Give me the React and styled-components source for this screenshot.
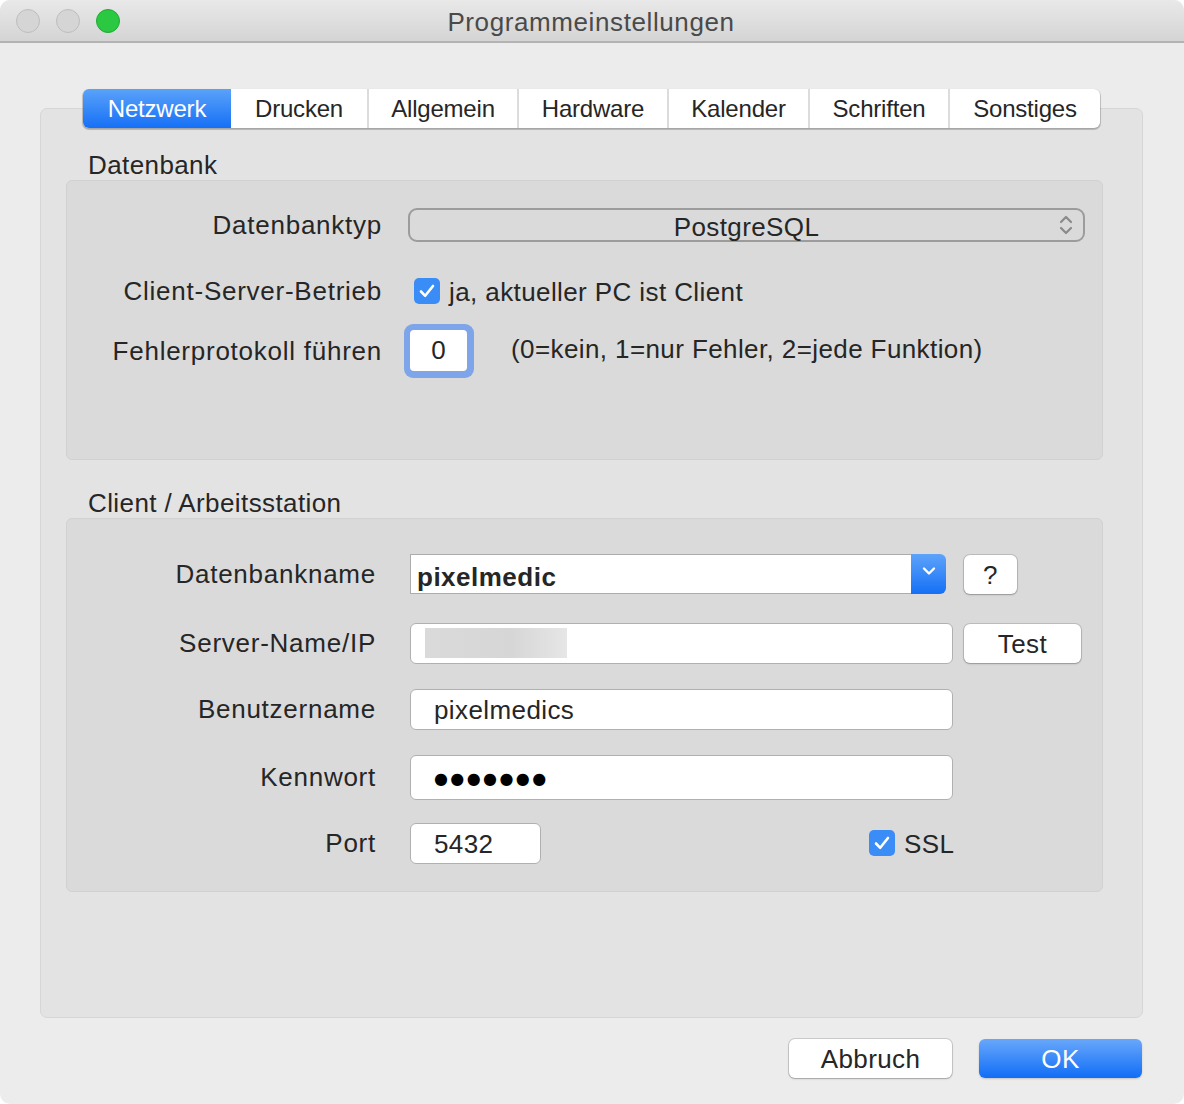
import React from "react";
import styled, { createGlobalStyle } from "styled-components";

const GlobalStyle = createGlobalStyle`
  html, body {
    margin: 0;
    padding: 0;
    background: #ffffff;
  }
  body {
    font-family: "Liberation Sans", Arial, sans-serif;
    color: #262626;
  }
`;

const tabs = ["Netzwerk", "Drucken", "Allgemein", "Hardware", "Kalender", "Schriften", "Sonstiges"];
const tabWidths = [148, 136, 150, 150, 141, 140, 152];

function CheckMark() {
  return (
    <svg width="18" height="16" viewBox="0 0 18 16">
      <path d="M3 8.5 L7.2 12.8 L15 3" fill="none" stroke="#fff" strokeWidth="2.6" strokeLinecap="round" strokeLinejoin="round" />
    </svg>
  );
}

function UpDown() {
  return (
    <svg width="16" height="24" viewBox="0 0 16 24">
      <path d="M3 9 L8 4 L13 9 M3 15 L8 20 L13 15" fill="none" stroke="#8a8a8a" strokeWidth="2.2" strokeLinecap="round" strokeLinejoin="round" />
    </svg>
  );
}

function ChevronDown() {
  return (
    <svg width="16" height="12" viewBox="0 0 16 12">
      <path d="M3 3.5 L8 8.5 L13 3.5" fill="none" stroke="#fff" strokeWidth="2.4" strokeLinecap="round" strokeLinejoin="round" />
    </svg>
  );
}

export default function App() {
  return (
    <>
      <GlobalStyle />
      <Window>
        <TitleBar>
          <Lights>
            <Light />
            <Light />
            <Light $green />
          </Lights>
          <Title>Programmeinstellungen</Title>
        </TitleBar>

        <Content>
          <TabBar>
            {tabs.map((t, i) => (
              <Tab key={t} $active={i === 0} $w={tabWidths[i]}>
                {t}
              </Tab>
            ))}
          </TabBar>

          <Panel>
            <GroupTitle $top={22}>Datenbank</GroupTitle>
            <GroupBox $pt={27} $pb={81}>
              <Row $h={34}>
                <Label $w={315}>Datenbanktyp</Label>
                <PopupButton>
                  <span>PostgreSQL</span>
                  <PopupArrows>
                    <UpDown />
                  </PopupArrows>
                </PopupButton>
              </Row>
              <Row $h={26} $mt={36}>
                <Label $w={315}>Client-Server-Betrieb</Label>
                <CheckRow $ml={32}>
                  <CheckBox>
                    <CheckMark />
                  </CheckBox>
                  ja, aktueller PC ist Client
                </CheckRow>
              </Row>
              <Row $h={54} $mt={20}>
                <Label $w={315}>Fehlerprotokoll führen</Label>
                <FocusRing>
                  <SmallInput>0</SmallInput>
                </FocusRing>
                <Hint>(0=kein, 1=nur Fehler, 2=jede Funktion)</Hint>
              </Row>
            </GroupBox>

            <GroupTitle $top={29}>Client / Arbeitsstation</GroupTitle>
            <GroupBox $pt={35} $pb={27}>
              <Row $h={40}>
                <Label $w={309}>Datenbankname</Label>
                <Combo>
                  <ComboText>pixelmedic</ComboText>
                  <ComboButton>
                    <ChevronDown />
                  </ComboButton>
                </Combo>
                <PushButton $w={53} $h={39} $ml={18}>?</PushButton>
              </Row>
              <Row $h={41} $mt={29}>
                <Label $w={309}>Server-Name/IP</Label>
                <TextField $w={543}>
                  <Blurred />
                </TextField>
                <PushButton $w={117} $h={39} $ml={11}>Test</PushButton>
              </Row>
              <Row $h={41} $mt={25}>
                <Label $w={309}>Benutzername</Label>
                <TextField $w={543}>pixelmedics</TextField>
              </Row>
              <Row $h={45} $mt={25}>
                <Label $w={309}>Kennwort</Label>
                <TextField $w={543}>
                  <Dots>●●●●●●●</Dots>
                </TextField>
              </Row>
              <Row $h={41} $mt={23}>
                <Label $w={309}>Port</Label>
                <TextField $w={131}>5432</TextField>
                <CheckRow $ml={328}>
                  <CheckBox>
                    <CheckMark />
                  </CheckBox>
                  SSL
                </CheckRow>
              </Row>
            </GroupBox>
          </Panel>

          <Footer>
            <FooterButton>Abbruch</FooterButton>
            <FooterButton $primary>OK</FooterButton>
          </Footer>
        </Content>
      </Window>
    </>
  );
}

// ---------- styles ----------

const Window = styled.div`
  width: 1184px;
  height: 1104px;
  box-sizing: border-box;
  background: #ececec;
  border-radius: 10px;
  overflow: hidden;
  display: flex;
  flex-direction: column;
`;

const TitleBar = styled.div`
  height: 43px;
  flex: none;
  box-sizing: border-box;
  background: linear-gradient(#e9e9e9, #d4d4d4);
  border-bottom: 2px solid #b3b3b3;
  display: flex;
  align-items: center;
  justify-content: center;
  position: relative;
`;

const Lights = styled.div`
  position: absolute;
  left: 16px;
  top: 9px;
  display: flex;
  gap: 16px;
`;

const Light = styled.span`
  width: 24px;
  height: 24px;
  box-sizing: border-box;
  border-radius: 50%;
  background: ${(p) => (p.$green ? "#2bc841" : "#d5d5d5")};
  border: 1px solid ${(p) => (p.$green ? "#20a934" : "#bdbdbd")};
`;

const Title = styled.div`
  font-size: 26px;
  letter-spacing: 0.6px;
  color: #4a4a4a;
  margin-left: -2px;
  margin-top: 3px;
`;

const Content = styled.div`
  flex: 1;
  display: flex;
  flex-direction: column;
  padding: 46px 41px 0 40px;
`;

const TabBar = styled.div`
  align-self: flex-start;
  margin-left: 43px;
  display: flex;
  height: 39px;
  box-sizing: border-box;
  background: #fff;
  border-radius: 6px;
  box-shadow: 0 1px 0 1px rgba(0, 0, 0, 0.14), 0 1px 2px rgba(0, 0, 0, 0.2);
  position: relative;
  z-index: 1;
  margin-bottom: -20px;
  overflow: hidden;
`;

const Tab = styled.div`
  width: ${(p) => p.$w}px;
  box-sizing: border-box;
  display: flex;
  align-items: center;
  justify-content: center;
  font-size: 24px;
  letter-spacing: -0.2px;
  color: ${(p) => (p.$active ? "#fff" : "#262626")};
  background: ${(p) => (p.$active ? "linear-gradient(#5aa2fa, #1670f6)" : "transparent")};
  border-left: ${(p) => (p.$active ? "none" : "2px solid #dcdcdc")};
  &:nth-child(2) {
    border-left: none;
  }
`;

const Panel = styled.div`
  height: 910px;
  box-sizing: border-box;
  background: #e3e3e3;
  border: 1px solid #d6d6d6;
  border-radius: 7px;
  padding: 20px 39px 0 25px;
  display: flex;
  flex-direction: column;
`;

const GroupTitle = styled.div`
  font-size: 26px;
  letter-spacing: 0.4px;
  margin: ${(p) => p.$top}px 0 1px 22px;
  height: 28px;
  line-height: 28px;
`;

const GroupBox = styled.div`
  background: #dadada;
  border: 1px solid #d1d1d1;
  border-radius: 6px;
  padding: ${(p) => p.$pt}px 17px ${(p) => p.$pb}px 0;
  display: flex;
  flex-direction: column;
`;

const Row = styled.div`
  display: flex;
  align-items: center;
  height: ${(p) => p.$h}px;
  margin-top: ${(p) => p.$mt || 0}px;
`;

const Label = styled.div`
  width: ${(p) => p.$w}px;
  flex: none;
  text-align: right;
  font-size: 26px;
  letter-spacing: 0.75px;
  white-space: nowrap;
`;

const PopupButton = styled.div`
  margin-left: 26px;
  flex: 1;
  height: 34px;
  box-sizing: border-box;
  border: 2px solid #9c9c9c;
  border-radius: 9px;
  display: flex;
  align-items: center;
  justify-content: center;
  font-size: 26px;
  letter-spacing: 0.4px;
  position: relative;
  padding-top: 4px;
`;

const PopupArrows = styled.span`
  position: absolute;
  right: 9px;
  top: 3px;
  display: flex;
`;

const CheckRow = styled.div`
  display: flex;
  align-items: center;
  margin-left: ${(p) => p.$ml}px;
  font-size: 26px;
  letter-spacing: 0.4px;
  gap: 9px;
  padding-top: 2px;
`;

const CheckBox = styled.span`
  width: 26px;
  height: 26px;
  border-radius: 5px;
  background: #3a8cf7;
  display: flex;
  align-items: center;
  justify-content: center;
  margin-top: -3px;
`;

const FocusRing = styled.div`
  margin-left: 22px;
  width: 70px;
  height: 54px;
  box-sizing: border-box;
  border-radius: 9px;
  background: #7ea5e9;
  padding: 6px 7px 7px 6px;
`;

const SmallInput = styled.div`
  height: 100%;
  background: #fff;
  border-radius: 4px;
  display: flex;
  align-items: center;
  justify-content: center;
  font-size: 26px;
`;

const Hint = styled.div`
  margin-left: 37px;
  margin-top: -4px;
  font-size: 26px;
  letter-spacing: 0.4px;
`;

const Combo = styled.div`
  margin-left: 34px;
  width: 536px;
  height: 40px;
  display: flex;
`;

const ComboText = styled.div`
  flex: 1;
  background: #fff;
  border: 1px solid #acacac;
  border-right: none;
  font-size: 26px;
  font-weight: bold;
  letter-spacing: 0.5px;
  padding: 7px 0 0 6px;
  box-sizing: border-box;
`;

const ComboButton = styled.div`
  width: 35px;
  border-radius: 0 6px 6px 0;
  background: linear-gradient(#5ea3fa, #1570f6);
  display: flex;
  align-items: center;
  justify-content: center;
  padding-bottom: 6px;
  box-sizing: border-box;
`;

const PushButton = styled.div`
  margin-left: ${(p) => p.$ml}px;
  width: ${(p) => p.$w}px;
  height: ${(p) => p.$h}px;
  box-sizing: border-box;
  background: #fff;
  border-radius: 6px;
  box-shadow: 0 0 0 1px rgba(0, 0, 0, 0.13), 0 1px 2px rgba(0, 0, 0, 0.22);
  display: flex;
  align-items: center;
  justify-content: center;
  font-size: 26px;
  letter-spacing: 0.4px;
  padding-top: 2px;
`;

const TextField = styled.div`
  margin-left: 34px;
  width: ${(p) => p.$w}px;
  height: 100%;
  box-sizing: border-box;
  background: #fff;
  border: 1px solid #b0b0b0;
  border-radius: 6px;
  display: flex;
  align-items: center;
  padding: 2px 0 0 23px;
  font-size: 26px;
  letter-spacing: 0.4px;
`;

const Blurred = styled.span`
  width: 142px;
  height: 30px;
  margin-left: -9px;
  margin-top: -4px;
  background: linear-gradient(90deg, #dadada, #d6d6d6 60%, #e6e6e6);
`;

const Dots = styled.span`
  font-family: "DejaVu Sans", sans-serif;
  font-size: 16px;
  letter-spacing: 2.4px;
  color: #000;
`;

const Footer = styled.div`
  display: flex;
  justify-content: flex-end;
  gap: 27px;
  margin-top: 21px;
  padding-right: 1px;
`;

const FooterButton = styled.div`
  width: 163px;
  height: 39px;
  box-sizing: border-box;
  border-radius: 6px;
  display: flex;
  align-items: center;
  justify-content: center;
  font-size: 26px;
  letter-spacing: 0.4px;
  padding-top: 2px;
  color: ${(p) => (p.$primary ? "#fff" : "#262626")};
  background: ${(p) => (p.$primary ? "linear-gradient(#68a8fb, #116df6)" : "#fff")};
  box-shadow: ${(p) =>
    p.$primary
      ? "0 1px 2px rgba(0, 0, 0, 0.18)"
      : "0 0 0 1px rgba(0, 0, 0, 0.13), 0 1px 2px rgba(0, 0, 0, 0.22)"};
`;
